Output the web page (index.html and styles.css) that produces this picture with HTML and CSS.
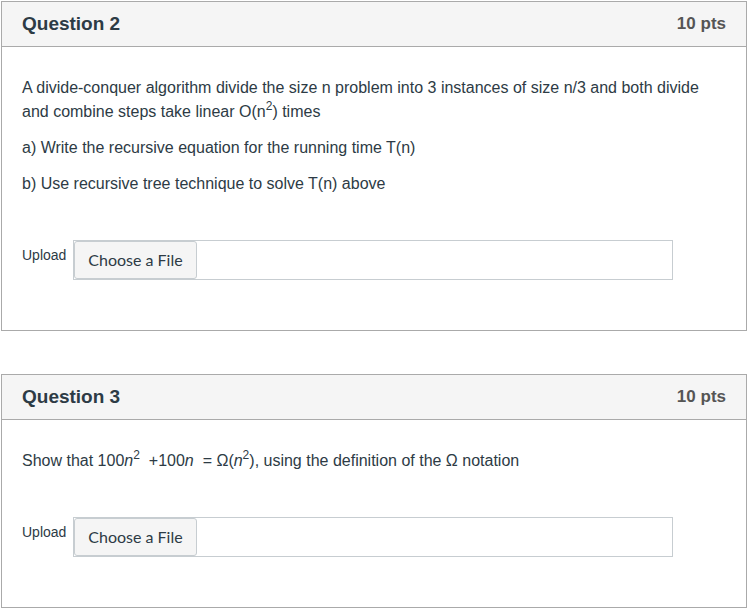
FILE: index.html
```html
<!DOCTYPE html>
<html lang="en">
  <head>
    <meta charset="UTF-8" />
    <meta name="viewport" content="width=device-width, initial-scale=1.0" />
    <title>Quiz</title>
    <link rel="stylesheet" href="styles.css">
  </head>
  <body>
    <div class="question">
      <div class="question-header">
        <h2>Question 2</h2>
        <span class="points">10 pts</span>
      </div>
      <div class="question-body">
        <p>A divide-conquer algorithm divide the size n problem into 3 instances of size n/3 and both divide and combine steps take linear O(n<sup>2</sup>) times</p>
        <p>a) Write the recursive equation for the running time T(n)</p>
        <p>b) Use recursive tree technique to solve T(n) above</p>
        <div class="upload">
          <span class="upload-label">Upload</span>
          <div class="file-input">
            <button type="button">Choose a File</button>
          </div>
        </div>
      </div>
    </div>

    <div class="question">
      <div class="question-header">
        <h2>Question 3</h2>
        <span class="points">10 pts</span>
      </div>
      <div class="question-body">
        <p>Show that 100<i>n</i><sup>2</sup>&nbsp; +100<i>n</i>&nbsp; = &Omega;(<i>n</i><sup>2</sup>), using the definition of the &Omega; notation</p>
        <div class="upload">
          <span class="upload-label">Upload</span>
          <div class="file-input">
            <button type="button">Choose a File</button>
          </div>
        </div>
      </div>
    </div>
  </body>
</html>
```

FILE: styles.css
```css
body {
  font-family: "Liberation Sans", Arial, sans-serif;
  color: #2d3b45;
  margin: 1px;
}
.question {
  width: 746px;
  box-sizing: border-box;
  border: 1px solid #aaa;
  margin-bottom: 43px;
}
.question:last-child {
  margin-bottom: 0;
}
.question-header {
  display: flex;
  justify-content: space-between;
  align-items: center;
  height: 44px;
  padding: 0 20px 0 20px;
  background-color: #f5f5f5;
  border-bottom: 1px solid #aaa;
}
.question-header h2 {
  margin: 0;
  font-size: 19px;
  font-weight: bold;
}
.points {
  font-size: 17px;
  font-weight: bold;
  color: #555;
}
.question-body {
  padding: 29px 20px 50px 20px;
}
.question-body p {
  margin: 0 0 12px 0;
  font-size: 16px;
  line-height: 24px;
}
sup {
  font-size: 12px;
  line-height: 0;
  vertical-align: 7px;
}
.upload {
  display: flex;
  align-items: flex-start;
  margin-top: 44px;
}
.upload-label {
  font-size: 14px;
  margin-top: 7px;
  width: 51px;
}
.file-input {
  width: 600px;
  height: 40px;
  box-sizing: border-box;
  border: 1px solid #c7cdd1;
  padding: 0;
}
.file-input button {
  height: 38px;
  width: 123px;
  margin: 0;
  padding: 0 0 2px 0;
  background-color: #f5f5f5;
  border: 1px solid #c7cdd1;
  border-radius: 3px;
  font-family: Lato, sans-serif;
  font-size: 16px;
  color: #2d3b45;
  cursor: pointer;
}
```
